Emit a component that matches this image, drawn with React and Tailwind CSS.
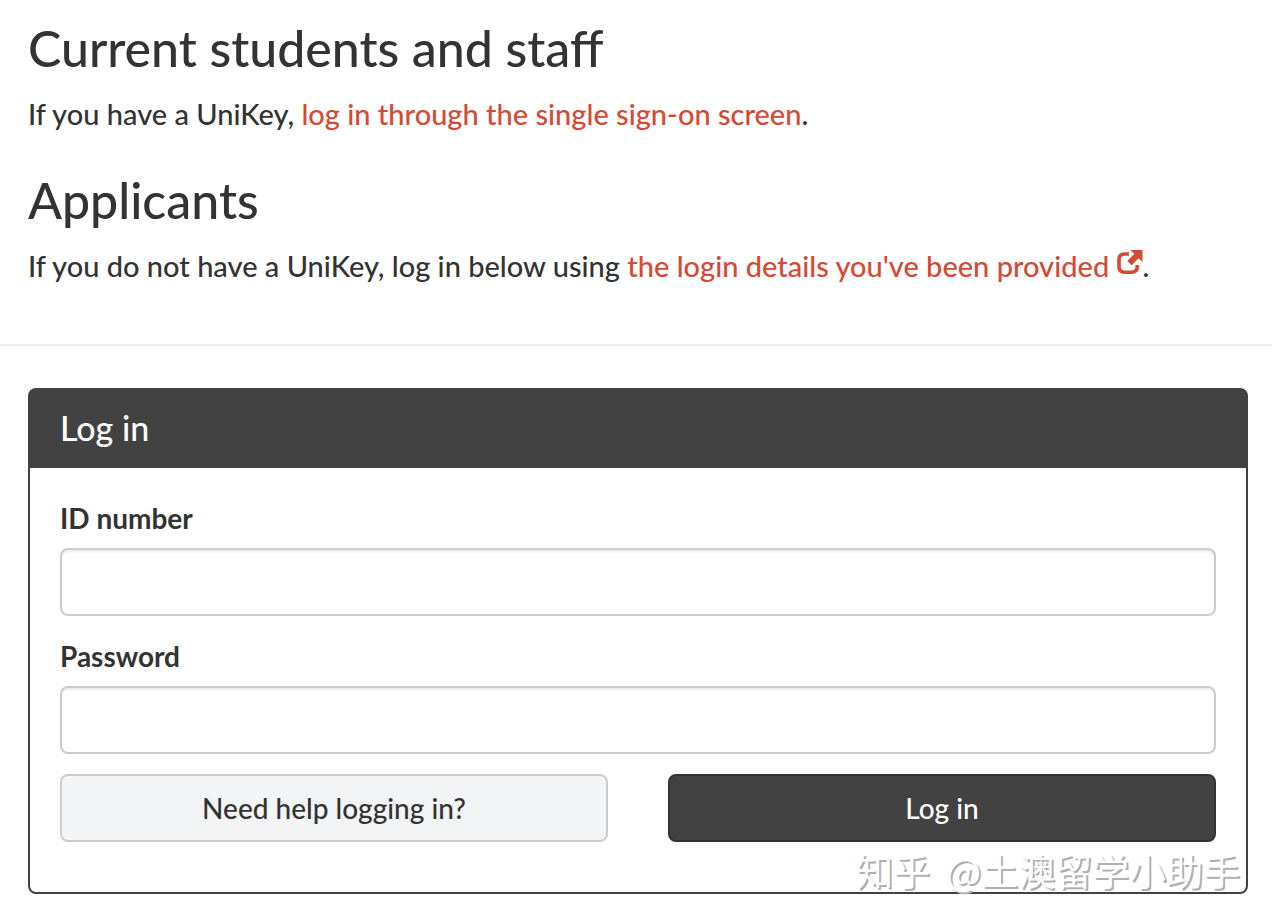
import React from 'react';

function ExternalIcon() {
  return (
    <svg viewBox="0 0 26 26" className="inline-block size-[26px] align-[1px]" aria-hidden="true">
      <path
        d="M12 4H7.500Q2 4 2 9.500v7.200Q2 22.200 7.500 22.200h7.200Q20.200 22.200 20.200 16.700V15"
        fill="none"
        stroke="currentColor"
        strokeWidth="3.6"
      />
      <path d="M13.500 0H25.500V12L21.700 8.200L14.600 15.200L10.300 10.900L17.300 3.900Z" fill="currentColor" />
    </svg>
  );
}

function Intro({ title, children }) {
  return (
    <section className="flex flex-col gap-5">
      <h2 className="text-[50px] leading-[52px]">{title}</h2>
      <p className="text-[29px] leading-10">{children}</p>
    </section>
  );
}

function Field({ id, label, type }) {
  return (
    <div className="flex flex-col">
      <label htmlFor={id} className="mb-2.5 font-bold leading-10">
        {label}
      </label>
      <input
        id={id}
        type={type}
        className="h-[68px] w-full rounded-lg border-2 border-[#ccc] bg-white px-6 shadow-[inset_0_2px_2px_rgba(0,0,0,0.075)] outline-none focus:border-[#424242]"
      />
    </div>
  );
}

export default function App() {
  return (
    <main className="bg-white pb-[30px] pt-[22px] font-['Lato',sans-serif] text-[28px] font-medium text-[#333]">
      <div className="flex flex-col gap-10 px-7">
        <Intro title="Current students and staff">
          If you have a UniKey,{' '}
          <a href="#sso" className="text-[#d64933]">log in through the single sign-on screen</a>.
        </Intro>
        <Intro title="Applicants">
          If you do not have a UniKey, log in below using{' '}
          <a href="#details" className="text-[#d64933]">
            the login details you've been provided <ExternalIcon />
          </a>
          .
        </Intro>
      </div>

      <hr className="mb-[42px] mt-[58px] border-t-2 border-[#eee]" />

      <div className="relative ml-7 mr-6">
        <form className="rounded-lg border-2 border-[#424242]" onSubmit={(e) => e.preventDefault()}>
          <h3 className="bg-[#424242] px-[30px] pb-5 pt-[18px] text-[34px] leading-10 text-white">Log in</h3>
          <div className="flex flex-col gap-5 px-[30px] pb-[50px] pt-[30px]">
            <Field id="id-number" label="ID number" type="text" />
            <Field id="password" label="Password" type="password" />
            <div className="grid grid-cols-2 gap-[60px]">
              <button type="button" className="h-[68px] rounded-lg border-2 border-[#ccc] bg-[#f3f4f6]">
                Need help logging in?
              </button>
              <button type="submit" className="h-[68px] rounded-lg border-2 border-[#333] bg-[#424242] text-white">
                Log in
              </button>
            </div>
          </div>
        </form>
        <div className="pointer-events-none absolute bottom-1 right-2 flex gap-4 whitespace-nowrap font-['Noto_Sans_CJK_SC',sans-serif] text-[37px] font-normal leading-10 text-white [text-shadow:2px_2px_0_#b0b0b0]">
          <span>知乎</span>
          <span>@土澳留学小助手</span>
        </div>
      </div>
    </main>
  );
}
